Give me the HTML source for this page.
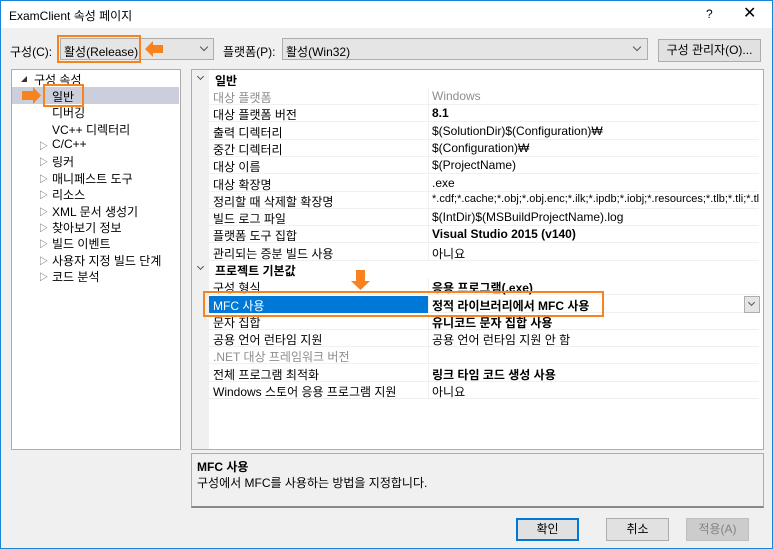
<!DOCTYPE html>
<html><head><meta charset="utf-8"><style>
*{box-sizing:border-box;margin:0;padding:0}
body{width:773px;height:549px;overflow:hidden;background:#f0f0f0;font-family:"Liberation Sans","Noto Sans CJK KR",sans-serif;font-size:12px;color:#000;position:relative}
.a{position:absolute;white-space:nowrap}
.win{position:absolute;left:0;top:0;width:773px;height:549px;border:1px solid #1883d7}
.title{position:absolute;left:1px;top:1px;width:771px;height:27px;background:#fff}
.combo{position:absolute;height:22px;background:#e5e5e5;border:1px solid #adadad}
.btn{position:absolute;height:23px;background:#e1e1e1;border:1px solid #adadad;text-align:center;line-height:21px}
.or{position:absolute;border:2px solid #f7821e;z-index:10}
.chev{position:absolute;width:6px;height:6px;border-right:1px solid #555;border-bottom:1px solid #555;transform:rotate(45deg)}
.row{position:absolute;left:209px;width:550px;height:17px;border-bottom:1px solid #f0f0f0;background:#fff}
.row .n{position:absolute;left:4px;top:1px}
.row .v{position:absolute;left:223px;top:1px}
.row:after{content:"";position:absolute;left:219px;top:0;width:1px;height:17px;background:#f0f0f0}
.hdr{position:absolute;left:209px;width:550px;height:17px;background:#fff;font-weight:bold}
.g{color:#8d8d8d}
.b{font-weight:bold}
.ti{position:absolute;left:52px}
</style></head><body>
<div class="win"></div>
<div class="title"></div>
<div class="a" style="left:9px;top:7px;font-size:12px">ExamClient 속성 페이지</div>
<div class="a" style="left:706px;top:7px">?</div>
<div class="a" style="left:743px;top:3px;font-size:16px">✕</div>

<div class="a" style="left:10px;top:43px">구성(C):</div>
<div class="combo" style="left:60px;top:38px;width:154px"></div>
<div class="a" style="left:64px;top:43px">활성(Release)</div>
<div class="chev" style="left:201px;top:44px"></div>
<div class="or" style="left:57px;top:35px;width:84px;height:28px"></div>
<svg class="a" style="left:145px;top:41px;z-index:10" width="18" height="16"><polygon points="0,8 8,0 8,4 18,4 18,12 8,12 8,16" fill="#f7821e"/></svg>

<div class="a" style="left:223px;top:43px">플랫폼(P):</div>
<div class="combo" style="left:282px;top:38px;width:366px"></div>
<div class="a" style="left:286px;top:43px">활성(Win32)</div>
<div class="chev" style="left:634px;top:44px"></div>
<div class="btn" style="left:658px;top:39px;width:103px">구성 관리자(O)...</div>

<!-- tree -->
<div class="a" style="left:11px;top:69px;width:170px;height:381px;background:#fff;border:1px solid #adadad"></div>
<div class="a" style="left:12px;top:87px;width:167px;height:17px;background:#cccedb"></div>
<div class="a" style="left:21px;top:76px;width:0;height:0;border-left:6px solid transparent;border-bottom:6px solid #333"></div>
<div class="a" style="left:34px;top:71px">구성 속성</div>
<div class="a" style="left:52px;top:88px">일반</div>
<div class="or" style="left:43px;top:84px;width:41px;height:23px"></div>
<svg class="a" style="left:22px;top:87px;z-index:10" width="19" height="17"><polygon points="19,8.5 11,0 11,4 0,4 0,13 11,13 11,17" fill="#f7821e"/></svg>
<div class="ti a" style="top:104px">디버깅</div>
<div class="ti a" style="top:121px">VC++ 디렉터리</div>
<div class="ti a" style="top:137px">C/C++</div>
<div class="ti a" style="top:153px">링커</div>
<div class="ti a" style="top:170px">매니페스트 도구</div>
<div class="ti a" style="top:186px">리소스</div>
<div class="ti a" style="top:203px">XML 문서 생성기</div>
<div class="ti a" style="top:219px">찾아보기 정보</div>
<div class="ti a" style="top:235px">빌드 이벤트</div>
<div class="ti a" style="top:252px">사용자 지정 빌드 단계</div>
<div class="ti a" style="top:268px">코드 분석</div>
<div class="a" style="left:39px;top:138px;color:#555;font-size:9px;line-height:16.4px;white-space:pre">▷
▷
▷
▷
▷
▷
▷
▷
▷</div>

<!-- grid -->
<div class="a" style="left:191px;top:69px;width:573px;height:381px;background:#fff;border:1px solid #adadad"></div>
<div class="a" style="left:192px;top:70px;width:17px;height:379px;background:#f0f0f0"></div>
<div class="hdr" style="top:71px"><span class="a" style="left:6px;top:1px">일반</span></div>
<div class="chev" style="left:198px;top:74px;width:5px;height:5px"></div>
<div class="row" style="top:88px"><span class="n g">대상 플랫폼</span><span class="v g">Windows</span></div>
<div class="row" style="top:105px"><span class="n">대상 플랫폼 버전</span><span class="v b">8.1</span></div>
<div class="row" style="top:123px"><span class="n">출력 디렉터리</span><span class="v">$(SolutionDir)$(Configuration)₩</span></div>
<div class="row" style="top:140px"><span class="n">중간 디렉터리</span><span class="v">$(Configuration)₩</span></div>
<div class="row" style="top:157px"><span class="n">대상 이름</span><span class="v">$(ProjectName)</span></div>
<div class="row" style="top:175px"><span class="n">대상 확장명</span><span class="v">.exe</span></div>
<div class="row" style="top:192px;overflow:hidden"><span class="n">정리할 때 삭제할 확장명</span><span class="v" style="font-size:11px">*.cdf;*.cache;*.obj;*.obj.enc;*.ilk;*.ipdb;*.iobj;*.resources;*.tlb;*.tli;*.tlh</span></div>
<div class="row" style="top:209px"><span class="n">빌드 로그 파일</span><span class="v">$(IntDir)$(MSBuildProjectName).log</span></div>
<div class="row" style="top:226px"><span class="n">플랫폼 도구 집합</span><span class="v b">Visual Studio 2015 (v140)</span></div>
<div class="row" style="top:244px"><span class="n">관리되는 증분 빌드 사용</span><span class="v">아니요</span></div>
<div class="hdr" style="top:261px"><span class="a" style="left:6px;top:1px">프로젝트 기본값</span></div>
<div class="chev" style="left:198px;top:264px;width:5px;height:5px"></div>
<div class="row" style="top:278px"><span class="n">구성 형식</span><span class="v b">응용 프로그램(.exe)</span></div>
<div class="row" style="top:296px"><div class="a" style="left:0;top:0;width:219px;height:17px;background:#0078d7"></div><span class="n" style="color:#fff">MFC 사용</span><span class="v b">정적 라이브러리에서 MFC 사용</span></div>
<div class="row" style="top:313px"><span class="n">문자 집합</span><span class="v b">유니코드 문자 집합 사용</span></div>
<div class="row" style="top:330px"><span class="n">공용 언어 런타임 지원</span><span class="v">공용 언어 런타임 지원 안 함</span></div>
<div class="row" style="top:347px"><span class="n g">.NET 대상 프레임워크 버전</span><span class="v"></span></div>
<div class="row" style="top:365px"><span class="n">전체 프로그램 최적화</span><span class="v b">링크 타임 코드 생성 사용</span></div>
<div class="row" style="top:382px"><span class="n">Windows 스토어 응용 프로그램 지원</span><span class="v">아니요</span></div>
<div class="a" style="left:744px;top:296px;width:16px;height:17px;background:#e5e5e5;border:1px solid #adadad;z-index:5"></div>
<div class="chev" style="left:749px;top:300px;width:5px;height:5px;z-index:6"></div>
<div class="or" style="left:203px;top:291px;width:401px;height:26px"></div>
<svg class="a" style="left:351px;top:270px;z-index:10" width="19" height="20"><polygon points="9.5,20 0,11 5,11 5,0 14,0 14,11 19,11" fill="#f7821e"/></svg>

<!-- description -->
<div class="a" style="left:191px;top:453px;width:573px;height:55px;background:#f0f0f0;border:1px solid #adadad;border-bottom:2px solid #888"></div>
<div class="a b" style="left:197px;top:458px">MFC 사용</div>
<div class="a" style="left:197px;top:474px">구성에서 MFC를 사용하는 방법을 지정합니다.</div>

<div class="btn" style="left:516px;top:518px;width:63px;border:2px solid #0078d7;line-height:19px">확인</div>
<div class="btn" style="left:606px;top:518px;width:63px">취소</div>
<div class="btn" style="left:686px;top:518px;width:63px;background:#ccc;border-color:#bfbfbf;color:#838383">적용(A)</div>
</body></html>
